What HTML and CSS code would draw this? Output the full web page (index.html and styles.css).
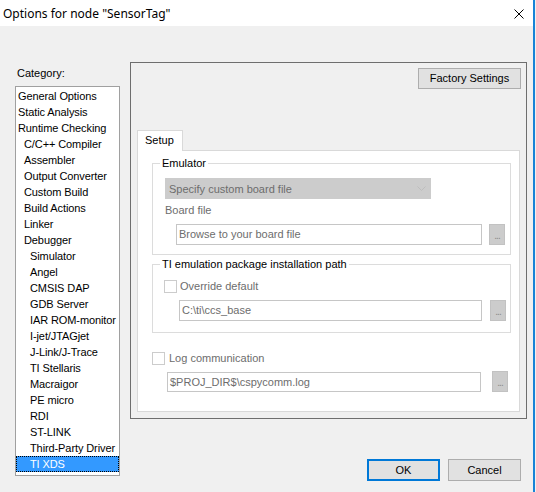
FILE: index.html
```html
<!DOCTYPE html>
<html>
<head>
<meta charset="utf-8">
<link rel="stylesheet" href="styles.css">
</head>
<body>
<div class="window">
  <div class="titlebar">
    <span class="title">Options for node "SensorTag"</span>
    <svg class="close" width="10" height="10" viewBox="0 0 10 10"><path d="M0.5 0.5 L9.5 9.5 M9.5 0.5 L0.5 9.5" stroke="#000" stroke-width="1" fill="none"/></svg>
  </div>
  <div class="content">
    <div class="sidebar">
      <div class="cat-label">Category:</div>
      <ul class="cat-list">
        <li class="l0">General Options</li>
        <li class="l0">Static Analysis</li>
        <li class="l0">Runtime Checking</li>
        <li class="l1">C/C++ Compiler</li>
        <li class="l1">Assembler</li>
        <li class="l1">Output Converter</li>
        <li class="l1">Custom Build</li>
        <li class="l1">Build Actions</li>
        <li class="l1">Linker</li>
        <li class="l1">Debugger</li>
        <li class="l2">Simulator</li>
        <li class="l2">Angel</li>
        <li class="l2">CMSIS DAP</li>
        <li class="l2">GDB Server</li>
        <li class="l2">IAR ROM-monitor</li>
        <li class="l2">I-jet/JTAGjet</li>
        <li class="l2">J-Link/J-Trace</li>
        <li class="l2">TI Stellaris</li>
        <li class="l2">Macraigor</li>
        <li class="l2">PE micro</li>
        <li class="l2">RDI</li>
        <li class="l2">ST-LINK</li>
        <li class="l2">Third-Party Driver</li>
        <li class="l2 selected">TI XDS</li>
      </ul>
    </div>
    <div class="panel">
      <div class="panel-top">
        <div class="btn factory">Factory Settings</div>
      </div>
      <div class="tabs"><div class="tab">Setup</div></div>
      <div class="tabpage">
        <fieldset class="group">
          <legend>Emulator</legend>
          <div class="emu-body">
            <div class="select">
              <span>Specify custom board file</span>
              <svg class="chev" width="9" height="5" viewBox="0 0 9 5"><path d="M0.5 0.5 L4.5 4.5 L8.5 0.5" stroke="#bdbdbd" stroke-width="1" fill="none"/></svg>
            </div>
            <div class="label">Board file</div>
            <div class="field-row board-row">
              <div class="input board-input">Browse to your board file</div>
              <div class="browse">...</div>
            </div>
          </div>
        </fieldset>
        <fieldset class="group ti-group">
          <legend>TI emulation package installation path</legend>
          <div class="ti-body">
            <div class="check-row">
              <span class="checkbox"></span>
              <span class="check-text">Override default</span>
            </div>
            <div class="field-row ti-row">
              <div class="input ti-input">C:\ti\ccs_base</div>
              <div class="browse">...</div>
            </div>
          </div>
        </fieldset>
        <div class="check-row log-check">
          <span class="checkbox"></span>
          <span class="check-text log-text">Log communication</span>
        </div>
        <div class="field-row log-row">
          <div class="input log-input">$PROJ_DIR$\cspycomm.log</div>
          <div class="browse">...</div>
        </div>
      </div>
    </div>
    <div class="footer">
      <div class="btn ok">OK</div>
      <div class="btn cancel">Cancel</div>
    </div>
  </div>
</div>
</body>
</html>
```

FILE: styles.css
```css
html, body {
  margin: 0;
  padding: 0;
  background: #f0f0f0;
}

.window {
  width: 533px;
  height: 492px;
  border-right: 2px solid #1883d7;
  background: #f0f0f0;
  display: flex;
  flex-direction: column;
  font-family: "Liberation Sans", Arial, sans-serif;
  font-size: 11px;
  color: #000;
  overflow: hidden;
}

.titlebar {
  height: 26px;
  flex: none;
  background: #fff;
  display: flex;
  justify-content: space-between;
  align-items: flex-start;
  padding: 0 9px 0 3px;
}

.title {
  font-family: "Noto Sans", sans-serif;
  font-size: 12px;
  line-height: 16px;
  margin-top: 6px;
}

.close {
  margin-top: 9px;
  display: block;
}

.content {
  flex: 1;
  display: grid;
  grid-template-columns: 105px 397px;
  grid-template-rows: auto 1fr;
  column-gap: 10px;
  padding-left: 15px;
  align-items: start;
}

.sidebar {
  grid-column: 1;
  grid-row: 1 / span 2;
}

.cat-label {
  margin-top: 41px;
  line-height: 13px;
  padding-left: 2px;
}

.cat-list {
  list-style: none;
  margin: 6px 0 0;
  padding: 1px 0 0;
  height: 390px;
  box-sizing: border-box;
  border: 1px solid #a0a0a0;
  background: #fff;
  letter-spacing: -0.1px;
}

.cat-list li {
  height: 16px;
  line-height: 16px;
  white-space: nowrap;
}

.cat-list .l0 { padding-left: 2px; }
.cat-list .l1 { padding-left: 8px; }
.cat-list .l2 { padding-left: 14px; }

.cat-list .selected {
  background: #3399ff;
  color: #fff;
  outline: 1px dotted #000;
  outline-offset: -1px;
}

.panel {
  grid-column: 2;
  grid-row: 1;
  margin-top: 36px;
  height: 357px;
  box-sizing: border-box;
  border: 1px solid #6e6e6e;
  padding: 5px 5px 0 6px;
}

.panel-top {
  display: flex;
  justify-content: flex-end;
}

.btn {
  box-sizing: border-box;
  height: 21px;
  background: #e1e1e1;
  border: 1px solid #adadad;
  display: flex;
  align-items: center;
  justify-content: center;
  line-height: 13px;
}

.factory {
  width: 103px;
}

.tabs {
  margin-top: 41px;
  display: flex;
}

.tab {
  position: relative;
  z-index: 1;
  box-sizing: border-box;
  width: 46px;
  height: 21px;
  border: 1px solid #d9d9d9;
  border-bottom: 0;
  background: #fff;
  padding-left: 7px;
  line-height: 19px;
  margin-bottom: -1px;
}

.tabpage {
  width: 383px;
  height: 262px;
  box-sizing: border-box;
  border: 1px solid #d9d9d9;
  background: #fff;
  padding: 0 8px 0 14px;
}

.group {
  margin: 6px 0 0;
  padding: 0;
  border: 1px solid #dcdcdc;
  min-width: 0;
}

.group legend {
  margin-left: 7px;
  padding: 0 2px;
  line-height: 13px;
  color: #000;
}

.ti-group {
  margin-top: 3px;
}

.emu-body {
  padding: 8px 0 9px 12px;
}

.select {
  width: 266px;
  height: 21px;
  box-sizing: border-box;
  background: #cccccc;
  border: 1px solid #cccccc;
  color: #6d6d6d;
  display: flex;
  align-items: center;
  justify-content: space-between;
  padding: 0 4px 0 3px;
}

.chev {
  display: block;
}

.label {
  margin-top: 5px;
  line-height: 13px;
  color: #6d6d6d;
}

.field-row {
  display: flex;
  align-items: center;
}

.board-row {
  margin-top: 7px;
  padding-left: 11px;
  gap: 7px;
}

.input {
  box-sizing: border-box;
  height: 21px;
  border: 1px solid #c6c6c6;
  background: #fff;
  color: #6d6d6d;
  padding-left: 2px;
  line-height: 19px;
  white-space: nowrap;
}

.board-input { width: 306px; }

.browse {
  box-sizing: border-box;
  width: 16px;
  height: 21px;
  background: #cccccc;
  border: 1px solid #c2c2c2;
  color: #8a8a8a;
  font-size: 10px;
  line-height: 21px;
  text-align: center;
  letter-spacing: -1px;
}

.ti-body {
  padding: 9px 0 11px 11px;
}

.check-row {
  display: flex;
  align-items: center;
  gap: 3px;
  line-height: 13px;
}

.checkbox {
  width: 13px;
  height: 13px;
  box-sizing: border-box;
  border: 1px solid #cccccc;
  background: #fff;
  flex: none;
}

.check-text {
  color: #6d6d6d;
}

.ti-row {
  margin-top: 7px;
  padding-left: 15px;
  gap: 8px;
}

.ti-input { width: 303px; }

.log-check {
  margin-top: 19px;
  gap: 4px;
}

.log-row {
  margin-top: 6px;
  padding-left: 15px;
  gap: 11px;
}

.log-input {
  width: 314px;
  height: 20px;
  line-height: 18px;
}

.footer {
  grid-column: 2;
  grid-row: 2;
  margin-top: 40px;
  display: flex;
  justify-content: flex-end;
  gap: 8px;
  padding-right: 6px;
}

.ok, .cancel {
  width: 73px;
  height: 22px;
}

.ok {
  border: 2px solid #0078d7;
}
```
